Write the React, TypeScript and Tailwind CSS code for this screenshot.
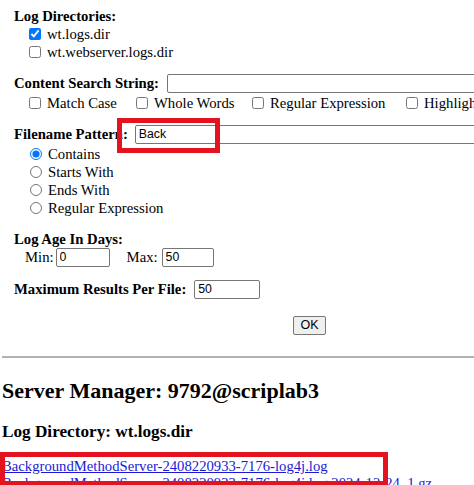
import React from 'react';

const inputCls =
  "h-[19px] border border-[#767676] rounded-[2px] px-[3px] text-[12.3px] text-black bg-white outline-none font-['Liberation_Sans',Arial,sans-serif]";

const Check: React.FC<{ label: string; checked?: boolean; className?: string }> = ({ label, checked, className }) => (
  <label className={`flex items-center h-[18px] ${className ?? ''}`}>
    <input
      type="checkbox"
      defaultChecked={checked}
      className="m-0 w-[12px] h-[12px] accent-[#0075ff] shrink-0"
    />
    <span className="ml-[6px] whitespace-nowrap">{label}</span>
  </label>
);

const Radio: React.FC<{ label: string; checked?: boolean }> = ({ label, checked }) => (
  <label className="flex items-center h-[18px] pl-[16px]">
    <input
      type="radio"
      name="pattern"
      defaultChecked={checked}
      className="m-0 w-[12px] h-[12px] accent-[#0075ff] shrink-0"
    />
    <span className="ml-[6px] whitespace-nowrap">{label}</span>
  </label>
);

export default function App() {
  return (
    <div className="relative w-[474px] h-[485px] overflow-hidden bg-white text-black text-[14.7px] leading-[18px] font-['Liberation_Serif','Times_New_Roman',serif]">
      {/* search form */}
      <div className="pl-[14px] pt-[7px]">
        <div className="font-bold h-[18px]">Log Directories:</div>
        <div className="pl-[15px]">
          <Check label="wt.logs.dir" checked />
          <Check label="wt.webserver.logs.dir" />
        </div>

        <div className="flex items-center h-[20px] mt-[12px]">
          <span className="font-bold whitespace-nowrap">Content Search String:</span>
          <input className={`${inputCls} ml-[8px] w-[330px] shrink-0`} defaultValue="" />
        </div>
        <div className="flex pl-[15px] h-[18px] mt-[1px]">
          <Check label="Match Case" className="w-[107px] shrink-0" />
          <Check label="Whole Words" className="w-[116px] shrink-0" />
          <Check label="Regular Expression" className="w-[154px] shrink-0" />
          <Check label="Highlight" className="shrink-0" />
        </div>

        <div className="flex items-center h-[20px] mt-[12px]">
          <span className="font-bold whitespace-nowrap">Filename Pattern:</span>
          <input className={`${inputCls} ml-[7px] w-[360px] shrink-0`} defaultValue="Back" />
        </div>
        <div className="mt-[1px]">
          <Radio label="Contains" checked />
          <Radio label="Starts With" />
          <Radio label="Ends With" />
          <Radio label="Regular Expression" />
        </div>

        <div className="font-bold h-[16px] leading-[16px] mt-[14px]">Log Age In Days:</div>
        <div className="flex items-center h-[20px] pl-[11px]">
          <span>Min:</span>
          <input className={`${inputCls} ml-[2px] w-[54px]`} defaultValue="0" />
          <span className="ml-[17px]">Max:</span>
          <input className={`${inputCls} ml-[4px] w-[52px]`} defaultValue="50" />
        </div>

        <div className="flex items-center h-[20px] mt-[12px]">
          <span className="font-bold whitespace-nowrap">Maximum Results Per File:</span>
          <input className={`${inputCls} ml-[8px] w-[66px]`} defaultValue="50" />
        </div>

        <div className="mt-[16px] pl-[279px]">
          <button className="w-[33px] h-[19px] bg-[#efefef] border border-[#767676] rounded-[2px] text-[12.5px] leading-none font-['Liberation_Sans',Arial,sans-serif]">
            OK
          </button>
        </div>
      </div>

      <div className="ml-[2px] mt-[21px] border-t-2 border-[#b2b2b2]" />

      {/* results */}
      <div className="pl-[2px]">
        <h2 className="font-bold text-[22px] leading-[25px] mt-[20px]">Server Manager: 9792@scriplab3</h2>
        <h3 className="font-bold text-[17.2px] leading-[20px] mt-[19px]">Log Directory: wt.logs.dir</h3>
        <div className="mt-[16px] leading-[17px]">
          <a href="#" className="block text-[#1a1ad6] underline whitespace-nowrap">
            BackgroundMethodServer-2408220933-7176-log4j.log
          </a>
          <a href="#" className="block text-[#1a1ad6] underline whitespace-nowrap">
            BackgroundMethodServer-2408220933-7176-log4j.log.2024-12-24_1.gz
          </a>
        </div>
      </div>

      {/* annotation boxes */}
      <div className="absolute left-[117px] top-[118px] w-[103px] h-[35px] border-[5px] border-[#e3141f]" />
      <div className="absolute left-0 top-[452px] w-[388px] h-[34px] border-[5px] border-[#e3141f]" />
    </div>
  );
}
